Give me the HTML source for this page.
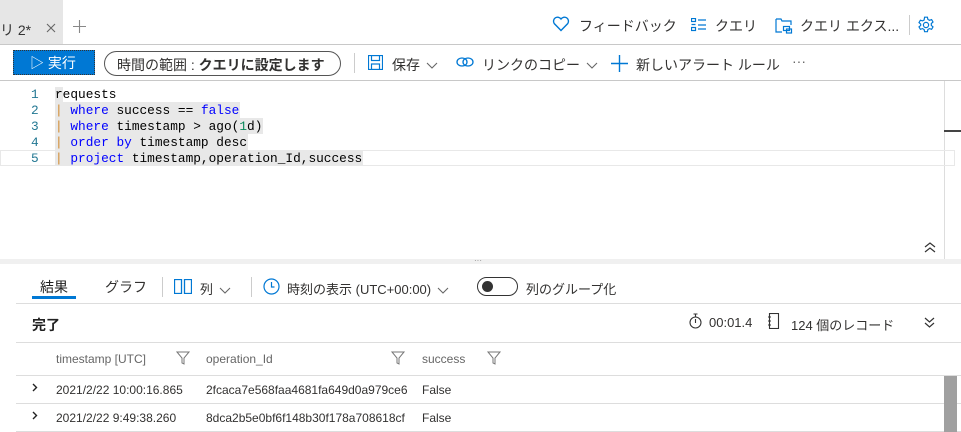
<!DOCTYPE html>
<html><head><meta charset="utf-8"><style>
*{margin:0;padding:0;box-sizing:border-box}
body{width:961px;height:432px;overflow:hidden;background:#fff;font-family:"Liberation Sans","Noto Sans CJK JP",sans-serif;color:#323130;font-size:13px;position:relative}
.a{position:absolute;white-space:nowrap}
.mono{font-family:"Liberation Mono","Noto Sans CJK JP",monospace;font-size:12.8px}
.kw{color:#0000ff}
.bar{color:#d08a2e}
.chev{display:inline-block;width:12px;height:8px;margin-left:6px;vertical-align:middle}
</style></head><body>
<!-- tab bar -->
<div class="a" style="left:0;top:0;width:63px;height:44px;background:#e6e6e6"></div>
<div class="a" style="left:0;top:20px;font-size:14px;color:#333">リ 2*</div>
<svg class="a" style="left:46px;top:23px" width="10" height="10"><path d="M1 1L9 9M9 1L1 9" stroke="#666" stroke-width="1.1"/></svg>
<svg class="a" style="left:73px;top:20px" width="13" height="13"><path d="M6.5 0v13M0 6.5h13" stroke="#888" stroke-width="1.1"/></svg>
<div class="a" style="left:0;top:44px;width:961px;height:1px;background:#c8c8c8"></div>
<svg class="a" style="left:552px;top:16px" width="18" height="16" viewBox="0 0 18 16"><path d="M9 14.5 L2.2 7.5 A3.8 3.8 0 0 1 9 3 A3.8 3.8 0 0 1 15.8 7.5 Z" fill="none" stroke="#0078d4" stroke-width="1.4"/></svg>
<div class="a" style="left:579px;top:16px;font-size:14px">フィードバック</div>
<svg class="a" style="left:691px;top:18px" width="16" height="14"><g fill="none" stroke="#0078d4" stroke-width="1.2"><rect x="0.5" y="0.5" width="4" height="3"/><rect x="0.5" y="9.5" width="4" height="3"/><path d="M7 2h8M7 7h8M0.5 6.5h4M7 11h8"/></g></svg>
<div class="a" style="left:715px;top:16px;font-size:14px">クエリ</div>
<svg class="a" style="left:775px;top:17px" width="18" height="17"><g fill="none" stroke="#0078d4" stroke-width="1.2"><path d="M1 2h5l1 2h9v4M1 2v13h6"/><rect x="8.5" y="9.5" width="6" height="4"/><rect x="11.5" y="12" width="5" height="4"/></g></svg>
<div class="a" style="left:800px;top:16px;font-size:14px">クエリ エクス...</div>
<div class="a" style="left:909px;top:15px;width:1px;height:20px;background:#ccc"></div>
<svg class="a" style="left:917px;top:16px" width="18" height="18" viewBox="0 0 18 18"><g fill="none" stroke="#0078d4" stroke-width="1.2"><circle cx="9" cy="9" r="2.6"/><path d="M7.6 1.2h2.8l.5 2.2 1.6.9 2.1-.7 1.4 2.4-1.7 1.5v1.9l1.7 1.5-1.4 2.4-2.1-.7-1.6.9-.5 2.2H7.6l-.5-2.2-1.6-.9-2.1.7-1.4-2.4 1.7-1.5V8.1L2 6.6l1.4-2.4 2.1.7 1.6-.9z"/></g></svg>
<!-- toolbar -->
<div class="a" style="left:13px;top:50px;width:82px;height:25px;background:#0078d4;outline:1px dotted #333;outline-offset:-1px;color:#fff;font-size:14px;padding:3px 0 0 17px">▷ 実行</div>
<div class="a" style="left:104px;top:51px;width:237px;height:25px;border:1px solid #555;border-radius:13px;font-size:14px;padding:3px 0 0 12px">時間の範囲 : <b style="font-weight:bold">クエリに設定します</b></div>
<div class="a" style="left:354px;top:53px;width:1px;height:20px;background:#ccc"></div>
<svg class="a" style="left:368px;top:55px" width="15" height="15"><g fill="none" stroke="#0078d4" stroke-width="1.2"><rect x="0.5" y="0.5" width="14" height="14"/><rect x="3.5" y="0.5" width="8" height="5"/><rect x="3.5" y="9" width="8" height="5.5"/></g></svg>
<div class="a" style="left:392px;top:55px;font-size:14px">保存<svg class="chev" viewBox="0 0 12 8"><path d="M1 1l5 5 5-5" fill="none" stroke="#666" stroke-width="1.1"/></svg></div>
<svg class="a" style="left:456px;top:56px" width="18" height="12"><g fill="none" stroke="#0078d4" stroke-width="1.3"><ellipse cx="6" cy="6" rx="5" ry="4"/><ellipse cx="12" cy="6" rx="5" ry="4"/></g></svg>
<div class="a" style="left:482px;top:55px;font-size:14px">リンクのコピー<svg class="chev" viewBox="0 0 12 8"><path d="M1 1l5 5 5-5" fill="none" stroke="#666" stroke-width="1.1"/></svg></div>
<svg class="a" style="left:611px;top:55px" width="17" height="17"><path d="M8.5 0v17M0 8.5h17" stroke="#0078d4" stroke-width="1.4"/></svg>
<div class="a" style="left:636px;top:55px;font-size:14px">新しいアラート ルール</div>
<div class="a" style="left:792px;top:53px;font-size:14px;color:#666">···</div>
<div class="a" style="left:0;top:80px;width:961px;height:1px;background:#c8c8c8"></div>
<!-- editor -->
<div class="a" style="left:944px;top:81px;width:1px;height:178px;background:#ddd"></div>
<div class="a" style="left:944px;top:130px;width:17px;height:2px;background:#444"></div>
<div class="a" style="left:0;top:150px;width:955px;height:16px;border:1px solid #e8e8e8"></div>
<div class="a" style="left:55px;top:87px;width:8px;height:15px;background:#e8e8e8"></div>
<div class="a" style="left:55px;top:102px;width:185px;height:16px;background:#e8e8e8"></div>
<div class="a" style="left:55px;top:118px;width:208px;height:16px;background:#e8e8e8"></div>
<div class="a" style="left:55px;top:134px;width:193px;height:16px;background:#e8e8e8"></div>
<div class="a" style="left:55px;top:150px;width:308px;height:16px;background:#e8e8e8"></div>
<div class="a mono" style="left:31px;top:87px;line-height:16px;color:#237893">1<br>2<br>3<br>4<br>5</div>
<div class="a mono" style="left:55px;top:87px;line-height:16px;color:#000">requests<br><span class="bar">|</span> <span class="kw">where</span> success == <span class="kw">false</span><br><span class="bar">|</span> <span class="kw">where</span> timestamp &gt; ago(<span style="color:#09885a">1</span>d)<br><span class="bar">|</span> <span class="kw">order by</span> timestamp desc<br><span class="bar">|</span> <span class="kw">project</span> timestamp,operation_Id,success</div>
<svg class="a" style="left:924px;top:242px" width="12" height="11"><path d="M1 5l5-4 5 4M1 10l5-4 5 4" fill="none" stroke="#333" stroke-width="1.2"/></svg>
<div class="a" style="left:0;top:259px;width:961px;height:5px;background:#f0f0f0"></div>
<div class="a" style="left:474px;top:256px;font-size:8px;color:#888">···</div>
<!-- results -->
<div class="a" style="left:40px;top:277px;font-size:14px;color:#222">結果</div>
<div class="a" style="left:32px;top:296px;width:44px;height:3px;background:#0078d4"></div>
<div class="a" style="left:105px;top:277px;font-size:14px">グラフ</div>
<div class="a" style="left:162px;top:277px;width:1px;height:20px;background:#ccc"></div>
<svg class="a" style="left:174px;top:279px" width="18" height="15"><g fill="none" stroke="#0078d4" stroke-width="1.3"><rect x="0.5" y="0.5" width="7" height="14"/><rect x="10.5" y="0.5" width="7" height="14"/></g></svg>
<div class="a" style="left:200px;top:279px;font-size:13px">列<svg class="chev" viewBox="0 0 12 8"><path d="M1 1l5 5 5-5" fill="none" stroke="#666" stroke-width="1.1"/></svg></div>
<div class="a" style="left:251px;top:277px;width:1px;height:20px;background:#ccc"></div>
<svg class="a" style="left:263px;top:278px" width="17" height="17"><circle cx="8.5" cy="8.5" r="7.5" fill="none" stroke="#0078d4" stroke-width="1.2"/><path d="M8.5 4v5h3" fill="none" stroke="#0078d4" stroke-width="1.2"/></svg>
<div class="a" style="left:287px;top:279px;font-size:13px">時刻の表示 (UTC+00:00)<svg class="chev" viewBox="0 0 12 8"><path d="M1 1l5 5 5-5" fill="none" stroke="#666" stroke-width="1.1"/></svg></div>
<div class="a" style="left:477px;top:277px;width:41px;height:19px;border:1px solid #333;border-radius:10px"></div>
<div class="a" style="left:482px;top:281px;width:11px;height:11px;border-radius:50%;background:#333"></div>
<div class="a" style="left:526px;top:279px;font-size:13px">列のグループ化</div>
<div class="a" style="left:16px;top:303px;width:945px;height:1px;background:#ddd"></div>
<div class="a" style="left:32px;top:315px;font-size:14px;font-weight:bold;color:#222">完了</div>
<svg class="a" style="left:689px;top:313px" width="13" height="16"><g fill="none" stroke="#333" stroke-width="1.1"><circle cx="6.5" cy="9.5" r="5.5"/><path d="M4.5 1h4M6.5 1v3M6.5 6v4"/></g></svg>
<div class="a" style="left:709px;top:315px;font-size:13px">00:01.4</div>
<svg class="a" style="left:768px;top:313px" width="12" height="16"><g fill="none" stroke="#333" stroke-width="1.1"><rect x="1.5" y="0.5" width="9" height="15"/><path d="M0 4h3M0 8h3M0 12h3"/></g></svg>
<div class="a" style="left:791px;top:315px;font-size:13px">124 個のレコード</div>
<svg class="a" style="left:924px;top:317px" width="11" height="11"><path d="M1 1l4.5 4 4.5-4M1 6l4.5 4 4.5-4" fill="none" stroke="#333" stroke-width="1.2"/></svg>
<div class="a" style="left:16px;top:342px;width:945px;height:1px;background:#ddd"></div>
<div class="a" style="left:56px;top:352px;font-size:12px;color:#666">timestamp [UTC]</div>
<div class="a" style="left:206px;top:352px;font-size:12px;color:#666">operation_Id</div>
<div class="a" style="left:422px;top:352px;font-size:12px;color:#666">success</div>
<svg class="a" style="left:176px;top:351px" width="340" height="14"><g fill="none" stroke="#777" stroke-width="1"><path d="M1 1h12L8 7v6L6 12V7Z"/><path d="M216 1h12l-5 6v6l-2-1V7Z"/><path d="M312 1h12l-5 6v6l-2-1V7Z"/></g></svg>
<div class="a" style="left:16px;top:375px;width:945px;height:1px;background:#ddd"></div>
<div class="a" style="left:16px;top:403px;width:945px;height:1px;background:#ddd"></div>
<div class="a" style="left:16px;top:431px;width:945px;height:1px;background:#ddd"></div>
<div class="a" style="left:944px;top:376px;width:13px;height:56px;background:#a0a0a0"></div>
<svg class="a" style="left:32px;top:383px" width="6" height="9"><path d="M1 1l3.5 3.5L1 8" fill="none" stroke="#222" stroke-width="1.4"/></svg>
<svg class="a" style="left:32px;top:411px" width="6" height="9"><path d="M1 1l3.5 3.5L1 8" fill="none" stroke="#222" stroke-width="1.4"/></svg>
<div class="a" style="left:56px;top:383px;font-size:12px">2021/2/22 10:00:16.865</div>
<div class="a" style="left:206px;top:383px;font-size:12px">2fcaca7e568faa4681fa649d0a979ce6</div>
<div class="a" style="left:422px;top:383px;font-size:12px">False</div>
<div class="a" style="left:56px;top:411px;font-size:12px">2021/2/22 9:49:38.260</div>
<div class="a" style="left:206px;top:411px;font-size:12px">8dca2b5e0bf6f148b30f178a708618cf</div>
<div class="a" style="left:422px;top:411px;font-size:12px">False</div>
</body></html>
